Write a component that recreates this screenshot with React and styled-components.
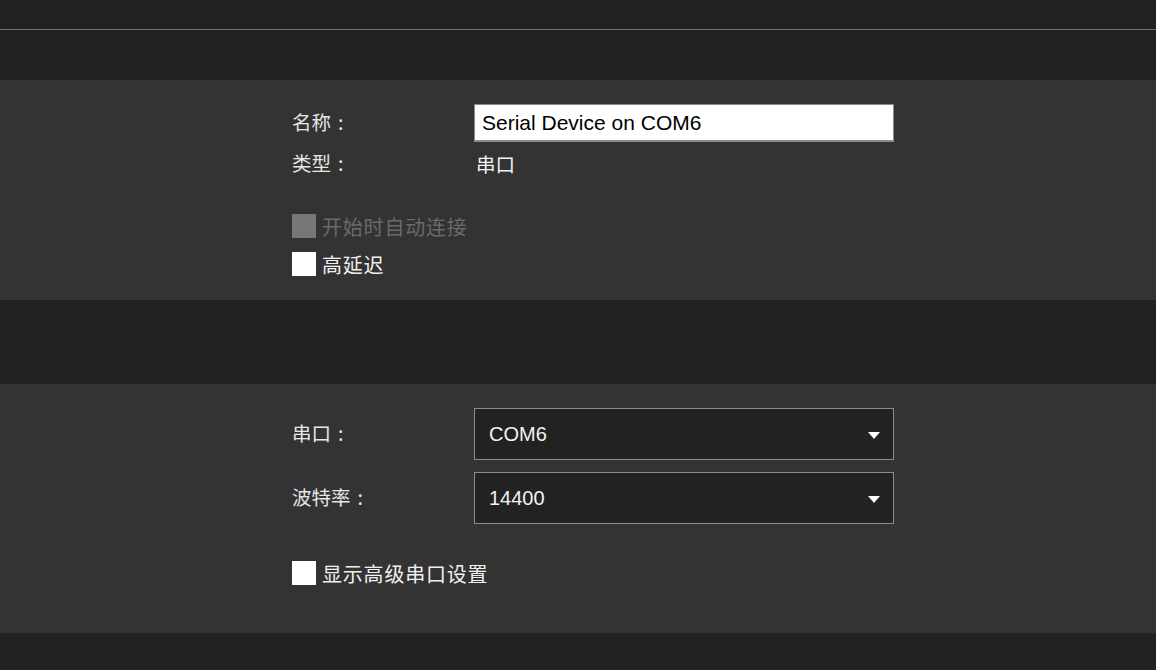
import React from 'react';
import styled, { createGlobalStyle } from 'styled-components';

const GlobalStyle = createGlobalStyle`
  html, body {
    margin: 0;
    padding: 0;
    background: #222222;
    font-family: "Liberation Sans", "Noto Sans CJK SC", sans-serif;
  }
`;

const Page = styled.div`
  width: 1156px;
  min-height: 670px;
  background: #222222;
  display: flex;
  flex-direction: column;
`;

const TopBar = styled.div`
  height: 29px;
  border-bottom: 1px solid #6e6c77;
`;

const Spacer = styled.div`
  height: ${p => p.$h}px;
`;

const Panel = styled.section`
  background: #333333;
  padding: 24px 0 ${p => p.$bottom}px 292px;
  display: flex;
  flex-direction: column;
`;

const Row = styled.div`
  display: flex;
  align-items: center;
  height: ${p => p.$h}px;
  margin-top: ${p => p.$mt || 0}px;
`;

const Label = styled.div`
  width: 182px;
  padding-bottom: 4px;
  color: #e6e6e6;
  font-size: 19.5px;
  font-family: "Noto Sans CJK SC", "Liberation Sans", sans-serif;
`;

const Colon = styled.span`
  margin-left: 7px;
`;

const Value = styled.div`
  color: #f2f2f2;
  font-size: 19.5px;
  margin-left: 2px;
  padding-bottom: 2px;
  font-family: "Noto Sans CJK SC", "Liberation Sans", sans-serif;
`;

const TextInput = styled.div`
  box-sizing: border-box;
  width: 420px;
  height: 38px;
  background: #ffffff;
  border: 1px solid #8a8a8a;
  border-bottom-width: 2px;
  padding: 0 7px;
  display: flex;
  align-items: center;
  font-size: 21px;
  color: #000;
`;

const Select = styled.div`
  box-sizing: border-box;
  width: 420px;
  height: 52px;
  background: #222222;
  border: 1px solid #8c8c8c;
  padding: 0 13px 0 14px;
  display: flex;
  align-items: center;
  justify-content: space-between;
  color: #f2f2f2;
  font-size: 20px;
`;

const Arrow = styled.span`
  width: 0;
  height: 0;
  border-left: 6.5px solid transparent;
  border-right: 6.5px solid transparent;
  border-top: 7px solid #ffffff;
  margin-top: 2px;
`;

const Check = styled.div`
  display: flex;
  align-items: center;
  gap: 6px;
  height: 24px;
  margin-top: ${p => p.$mt}px;
`;

const Box = styled.span`
  width: 24px;
  height: 24px;
  background: ${p => (p.$disabled ? '#777777' : '#ffffff')};
`;

const CheckText = styled.span`
  font-size: 20px;
  letter-spacing: 0.8px;
  color: ${p => (p.$disabled ? '#6a6a6a' : '#f0f0f0')};
  font-family: "Noto Sans CJK SC", "Liberation Sans", sans-serif;
`;

const App = () => (
  <>
    <GlobalStyle />
    <Page>
      <TopBar />
      <Spacer $h={50} />
      <Panel $bottom={24}>
        <Row $h={38}>
          <Label>名称<Colon>:</Colon></Label>
          <TextInput>Serial Device on COM6</TextInput>
        </Row>
        <Row $h={28} $mt={8}>
          <Label>类型<Colon>:</Colon></Label>
          <Value>串口</Value>
        </Row>
        <Check $mt={36}>
          <Box $disabled />
          <CheckText $disabled>开始时自动连接</CheckText>
        </Check>
        <Check $mt={14}>
          <Box />
          <CheckText>高延迟</CheckText>
        </Check>
      </Panel>
      <Spacer $h={84} />
      <Panel $bottom={48}>
        <Row $h={52}>
          <Label>串口<Colon>:</Colon></Label>
          <Select>
            <span>COM6</span>
            <Arrow />
          </Select>
        </Row>
        <Row $h={52} $mt={12}>
          <Label>波特率<Colon>:</Colon></Label>
          <Select>
            <span>14400</span>
            <Arrow />
          </Select>
        </Row>
        <Check $mt={37}>
          <Box />
          <CheckText>显示高级串口设置</CheckText>
        </Check>
      </Panel>
    </Page>
  </>
);

export default App;
